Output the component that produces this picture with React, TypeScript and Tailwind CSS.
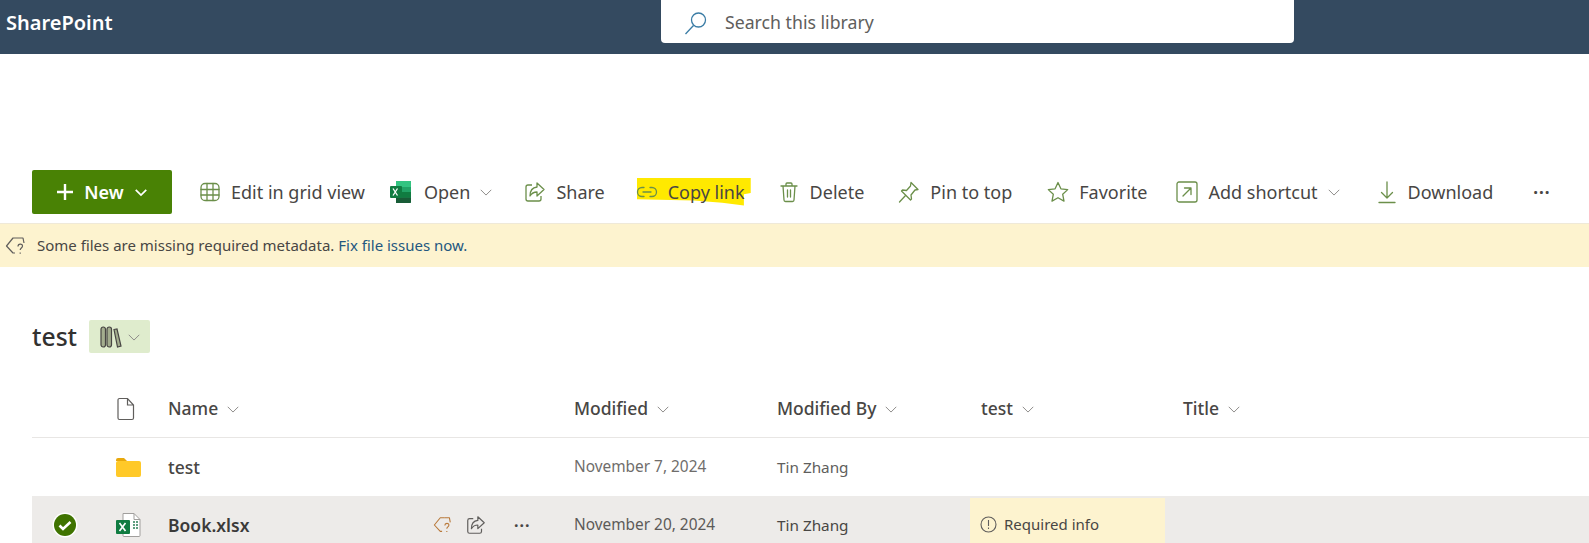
import type { ReactNode } from "react";

const green = "#6b8f4a";

function Chevron({ color = "#8a8886", size = 14, weight = 1.1 }: { color?: string; size?: number; weight?: number }) {
  return (
    <svg width={size} height={size} viewBox="0 0 16 16" fill="none" stroke={color} strokeWidth={weight}>
      <path d="M2 5.500l6 6 6-6" />
    </svg>
  );
}

function ToolIcon({ children }: { children: ReactNode }) {
  return (
    <svg width="24" height="24" viewBox="0 0 24 24" fill="none" stroke={green} strokeWidth="1.300" strokeLinejoin="round" strokeLinecap="round">
      {children}
    </svg>
  );
}

function ExcelIcon() {
  return (
    <svg className="mr-[2px]" width="24" height="24" viewBox="0 0 24 24">
      <path d="M7 1h14a1 1 0 011 1v20a1 1 0 01-1 1H7z" fill="#21a366" />
      <path d="M7 1h15v6H7z" fill="#33c481" />
      <path d="M7 12h15v5.500H7z" fill="#107c41" />
      <path d="M7 17.500h15V22a1 1 0 01-1 1H7z" fill="#185c37" />
      <rect x="1" y="6" width="12" height="12" rx="1" fill="#107c41" />
      <path d="M4 8.500l4.500 7M8.500 8.500L4 15.500" stroke="#fff" strokeWidth="1.300" />
    </svg>
  );
}

function TagQuestion({ color, size = 22 }: { color: string; size?: number }) {
  return (
    <svg width={size} height={size} viewBox="0 0 22 22" fill="none" stroke={color} strokeWidth="1.200" strokeLinejoin="round">
      <path d="M13 3H8L1.500 11 8 18h2" />
      <path d="M13 3l5 0 1 5" />
      <path d="M13 11.500c0-3 4.500-3 4.500-.5 0 2-2.300 2-2.300 4M15.200 17.500v1.200" />
    </svg>
  );
}

function ShareIcon({ color, size = 24 }: { color: string; size?: number }) {
  return (
    <svg width={size} height={size} viewBox="0 0 24 24" fill="none" stroke={color} strokeWidth="1.300" strokeLinejoin="round">
      <path d="M9 5H5a2 2 0 00-2 2v12a2 2 0 002 2h11a2 2 0 002-2v-3" />
      <path d="M14 3l7 6.500-7 6.500v-4c-3.500 0-5.500 1.500-7 4 0-5 2.500-8.500 7-9z" />
    </svg>
  );
}

function ToolItem({ icon, label, chevron, className }: { icon: ReactNode; label: string; chevron?: boolean; className?: string }) {
  return (
    <div className={`flex items-center gap-[9px] ${className ?? ""}`}>
      {icon}
      <span>{label}</span>
      {chevron && <Chevron />}
    </div>
  );
}

function HeaderCell({ label }: { label: string }) {
  return (
    <div className="flex items-center gap-[8px] font-medium text-[#484644]">
      <span>{label}</span>
      <Chevron />
    </div>
  );
}

export default function App() {
  return (
    <div className="h-[543px] overflow-hidden bg-white text-[#484644]" style={{ fontFamily: '"Noto Sans", "Open Sans", sans-serif' }}>
      <header className="flex h-[54px] items-start bg-[#344a60]">
        <div className="w-[661px] pl-[6px] pt-[8px] text-[20px] font-semibold text-white">SharePoint</div>
        <div className="flex h-[43px] w-[633px] items-center gap-[17px] rounded-b-[4px] bg-white pl-[23px] pt-[2px] text-[17.700px] text-[#605e5c]">
          <svg width="24" height="24" viewBox="0 0 24 24" fill="none" stroke="#3a7ca5" strokeWidth="1.300">
            <circle cx="14.500" cy="9" r="7" />
            <path d="M9.500 14.500L1.500 23" />
          </svg>
          <span>Search this library</span>
        </div>
      </header>

      <div className="flex h-[160px] items-end pl-[32px]">
        <div className="flex items-center text-[18px]">
          <div className="mr-[26px] flex h-[44px] w-[140px] items-center justify-center gap-[10px] rounded-[2px] bg-[#498205] font-semibold text-white">
            <svg width="18" height="18" viewBox="0 0 18 18" stroke="#fff" strokeWidth="2.400">
              <path d="M9 1v16M1 9h16" />
            </svg>
            <span>New</span>
            <Chevron color="#fff" weight={2} />
          </div>
          <ToolItem
            className="mr-[24px]"
            label="Edit in grid view"
            icon={
              <ToolIcon>
                <rect x="3" y="3.500" width="18" height="17" rx="4" />
                <path d="M3 9.500h18M3 15h18M9 3.500v17M15 3.500v17" />
              </ToolIcon>
            }
          />
          <ToolItem className="mr-[30px]" label="Open" chevron icon={<ExcelIcon />} />
          <ToolItem className="mr-[30px]" label="Share" icon={<ShareIcon color={green} />} />
          <div className="relative isolate mr-[32px]">
            <div className="absolute -z-10 left-[2px] top-[-1px] h-[28px] w-[114px] bg-[#ffe900] [clip-path:polygon(0_0,100%_0,100%_55%,94%_60%,94%_100%,75%_90%,50%_82%,0_78%)]" />
            <ToolItem
              label="Copy link"
              icon={
                <ToolIcon>
                  <path d="M9 7.500H7a4.500 4.500 0 000 9h2M15 7.500h2a4.500 4.500 0 010 9h-2M8 12h8" />
                </ToolIcon>
              }
            />
          </div>
          <ToolItem
            className="mr-[33px]"
            label="Delete"
            icon={
              <ToolIcon>
                <path d="M4 6h16M9 6V4a1 1 0 011-1h4a1 1 0 011 1v2M6 6l1 14a1.500 1.500 0 001.500 1.500h7A1.500 1.500 0 0017 20l1-14M10.500 10v7M13.500 10v7" />
              </ToolIcon>
            }
          />
          <ToolItem
            className="mr-[34px]"
            label="Pin to top"
            icon={
              <ToolIcon>
                <path d="M14 2.500l7 7-3 .500-4 5 .500 4-1 1-9-9 1-1 4 .500 4-4.500zM8.500 15.500L2.500 22" />
              </ToolIcon>
            }
          />
          <ToolItem
            className="mr-[28px]"
            label="Favorite"
            icon={
              <ToolIcon>
                <path d="M12 2.500l2.900 6.300 6.800.800-5 4.700 1.300 6.800-6-3.400-6 3.400 1.300-6.800-5-4.700 6.800-.800z" />
              </ToolIcon>
            }
          />
          <ToolItem
            className="mr-[34px]"
            label="Add shortcut"
            chevron
            icon={
              <ToolIcon>
                <rect x="2" y="2" width="20" height="20" rx="2" />
                <path d="M8 16l8-8M9.500 8H16v6.500" />
              </ToolIcon>
            }
          />
          <ToolItem
            className="mr-[40px]"
            label="Download"
            icon={
              <ToolIcon>
                <path d="M12 2v16M6.500 12.500L12 18l5.500-5.500M4 22.500h16" />
              </ToolIcon>
            }
          />
          <span className="text-[17px] font-bold leading-none tracking-[1px]">···</span>
        </div>
      </div>

      <div className="mt-[9px] flex h-[44px] items-center gap-[10px] border-t border-[#efe9d8] bg-[#fdf3cf] pl-[5px] text-[15px]">
        <TagQuestion color="#605e5c" />
        <span>
          Some files are missing required metadata. <span className="text-[#23577f]">Fix file issues now.</span>
        </span>
      </div>

      <div className="flex h-[70px] items-center gap-[12px] pl-[32px] pt-[69px]">
        <span className="text-[24.700px] font-medium text-[#323130]">test</span>
        <div className="flex h-[33px] w-[61px] items-center justify-center gap-[4px] rounded-[2px] bg-[#dfeccd]">
          <svg width="24" height="24" viewBox="0 0 24 24" fill="#a3ad8e" stroke="#484644" strokeWidth="1.200">
            <rect x="2" y="2" width="4.500" height="20" rx="2.200" />
            <rect x="8" y="2" width="4.500" height="20" rx="2.200" />
            <path d="M15 4.500l3-.500 4 17-3.500 1z" />
          </svg>
          <Chevron />
        </div>
      </div>

      <div className="ml-[32px] mt-[43px] text-[17.500px]">
        <div className="grid h-[58px] grid-cols-[83px_53px_406px_203px_204px_202px_1fr] items-center border-b border-[#e8e6e4]">
          <div />
          <svg width="22" height="24" viewBox="0 0 22 24" fill="none" stroke="#605e5c" strokeWidth="1.200">
            <path d="M4.500 1.500h8l6 6.500v13a1.500 1.500 0 01-1.500 1.500H4.500A1.500 1.500 0 013 21V3a1.500 1.500 0 011.500-1.500zM12.500 1.500V8h6" />
          </svg>
          <HeaderCell label="Name" />
          <HeaderCell label="Modified" />
          <HeaderCell label="Modified By" />
          <HeaderCell label="test" />
          <HeaderCell label="Title" />
        </div>

        <div className="grid h-[58px] grid-cols-[83px_53px_406px_203px_204px_202px_1fr] items-center">
          <div />
          <svg width="26" height="22" viewBox="0 0 26 22">
            <path d="M1 4a2 2 0 012-2h6l3 3H1z" fill="#e8a80c" />
            <rect x="1" y="5" width="25" height="16" rx="2" fill="#ffc928" />
          </svg>
          <span className="font-medium">test</span>
          <span className="text-[15.400px] text-[#6f6d6b]">November 7, 2024</span>
          <span className="text-[15.300px] text-[#605e5c]">Tin Zhang</span>
        </div>

        <div className="grid h-[58px] grid-cols-[83px_53px_406px_203px_204px_202px_1fr] items-center bg-[#edebe9]">
          <svg className="ml-[20px]" width="26" height="26" viewBox="0 0 26 26">
            <circle cx="13" cy="13" r="12.500" fill="#fff" />
            <circle cx="13" cy="13" r="11" fill="#3f7300" />
            <path d="M7.500 13.500l3.500 3.500 7.500-7" fill="none" stroke="#fff" strokeWidth="2.600" />
          </svg>
          <svg width="26" height="26" viewBox="0 0 26 26">
            <path d="M8 1.500h11l6 6v16a1 1 0 01-1 1H9a1 1 0 01-1-1z" fill="#fff" stroke="#a19f9d" />
            <path d="M19 1.500V7.500h6" fill="none" stroke="#a19f9d" />
            <path d="M18 10h5M18 13h5M18 16h5" stroke="#5f9e80" strokeWidth="2" strokeDasharray="2 1" />
            <rect x="1" y="8" width="14" height="14" rx="1" fill="#107c41" />
            <path d="M4.500 11l6 8M10.500 11l-6 8" stroke="#fff" strokeWidth="1.600" />
          </svg>
          <div className="flex items-center">
            <span className="w-[265px] font-semibold text-[#3b3a39]">Book.xlsx</span>
            <TagQuestion color="#b9793a" size={20} />
            <span className="ml-[12px]">
              <ShareIcon color="#605e5c" size={22} />
            </span>
            <span className="ml-[27px] text-[16px] font-bold leading-none tracking-[1px]">···</span>
          </div>
          <span className="text-[15.400px] text-[#5c5a58]">November 20, 2024</span>
          <span className="text-[15.300px] text-[#484644]">Tin Zhang</span>
          <div className="-ml-[11px] mt-[2px] flex h-[56px] w-[195px] items-center gap-[7px] bg-[#fdf3cf] pb-[4px] pl-[10px] text-[15px]">
            <svg width="17" height="17" viewBox="0 0 17 17" fill="none" stroke="#605e5c" strokeWidth="1.100">
              <circle cx="8.500" cy="8.500" r="7.500" />
              <path d="M8.500 4v6M8.500 11.500v1.500" />
            </svg>
            <span>Required info</span>
          </div>
        </div>
      </div>
    </div>
  );
}
